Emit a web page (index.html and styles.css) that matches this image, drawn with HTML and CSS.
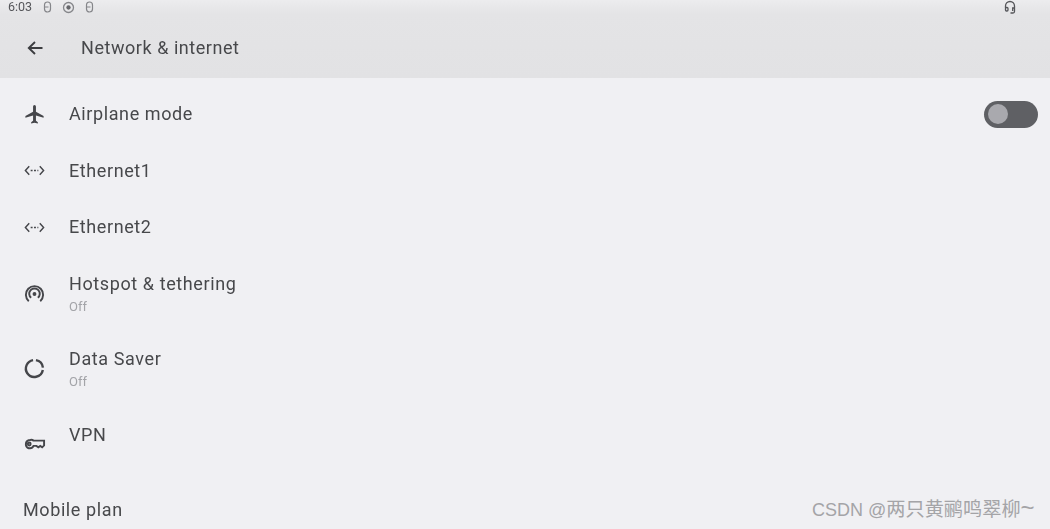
FILE: index.html
```html
<!DOCTYPE html>
<html lang="en">
<head>
<meta charset="utf-8">
<title>Network &amp; internet</title>
<link rel="stylesheet" href="styles.css">
</head>
<body>
<div class="screen">
  <header class="top">
    <div class="status">
      <div class="status-left">
        <span class="clock">6:03</span>
        <svg class="si" viewBox="0 0 10 12"><path d="M2 4C2 2 3.200 1 5 1s3 1 3 3v4c0 2-1.200 3-3 3S2 10 2 8V4M2 6h4"/></svg>
        <svg class="si si-rec" viewBox="0 0 12 12"><circle cx="6" cy="6" r="4.600"/><circle class="fill" cx="6" cy="6" r="2"/></svg>
        <svg class="si" viewBox="0 0 10 12"><path d="M2 4C2 2 3.200 1 5 1s3 1 3 3v4c0 2-1.200 3-3 3S2 10 2 8V4M2 6h4"/></svg>
      </div>
      <svg class="headset" viewBox="0 0 14 14"><path d="M2.500 8V6a4.500 4.500 0 0 1 9 0v5.500A1.500 1.500 0 0 1 10 13H7.500"/><rect x="2.500" y="7.500" width="2.500" height="3.500" rx="1"/><path d="M11.500 8h-1.800v3"/></svg>
    </div>
    <div class="appbar">
      <svg class="back" viewBox="0 0 18 18"><path d="M16.500 9H3M9 3 2.800 9 9 15"/></svg>
      <h1 class="title">Network &amp; internet</h1>
    </div>
  </header>
  <main class="list">
    <div class="row row-air">
      <svg class="icon" viewBox="0 0 24 24"><path class="fill" d="M21.500 15.500v-2L13.500 9V3.800C13.500 2.800 12.800 2 12 2s-1.500.8-1.500 1.800V9L2.500 13.500v2l8-2.500v5.500l-2 1.500V21.500L12 20.500l3.500 1V20l-2-1.500V13z"/></svg>
      <div class="text"><div class="name">Airplane mode</div></div>
      <div class="switch"><span class="thumb"></span></div>
    </div>
    <div class="row">
      <svg class="icon icon-thin" viewBox="0 0 24 24"><path d="M6.500 7.500 2.500 12l4 4.500M17.500 7.500l4 4.500-4 4.500"/><path class="dots" d="M8 12h8"/></svg>
      <div class="text"><div class="name">Ethernet1</div></div>
    </div>
    <div class="row">
      <svg class="icon icon-thin" viewBox="0 0 24 24"><path d="M6.500 7.500 2.500 12l4 4.500M17.500 7.500l4 4.500-4 4.500"/><path class="dots" d="M8 12h8"/></svg>
      <div class="text"><div class="name">Ethernet2</div></div>
    </div>
    <div class="row row-tall">
      <svg class="icon" viewBox="0 0 24 24"><path d="M6 20A9 9 0 1 1 18 20M8.500 16.500A5.500 5.500 0 1 1 15.500 16.500"/><circle class="fill" cx="12" cy="12.500" r="2"/></svg>
      <div class="text"><div class="name">Hotspot &amp; tethering</div><div class="sub">Off</div></div>
    </div>
    <div class="row row-tall">
      <svg class="icon icon-saver" viewBox="0 0 24 24"><path d="M13.500 3.200A9 9 0 0 1 20.800 11M20.700 13.500A9 9 0 0 1 4.500 17 9 9 0 0 1 10.500 3.200"/></svg>
      <div class="text"><div class="name">Data Saver</div><div class="sub">Off</div></div>
    </div>
    <div class="row row-tall">
      <svg class="icon" viewBox="0 0 24 24"><path d="M11 9h11v5l-2 2-2-1.500-2 1.500-2-1.500h-3A4 4 0 0 1 7 17H6A4.500 4.500 0 0 1 6 8.500h1A4 4 0 0 1 11 9z"/><circle cx="6.500" cy="12.500" r="1.500"/></svg>
      <div class="text text-vpn"><div class="name">VPN</div><div class="sub">&nbsp;</div></div>
    </div>
    <div class="row row-plain">
      <div class="name">Mobile plan</div>
    </div>
  </main>
  <div class="mark">CSDN @<span class="mark-cjk">两只黄鹂鸣翠柳</span><span class="mark-tilde">~</span></div>
</div>
</body>
</html>
```
FILE: styles.css
```css
* { box-sizing: border-box; }
html, body { margin: 0; padding: 0; height: 100%; overflow: hidden; }
body { background: #f0f0f3; font-family: Roboto, "Liberation Sans", sans-serif; color: #38393c; }
.screen { position: relative; width: 1050px; height: 529px; overflow: hidden; }
.top { height: 78px; background: linear-gradient(#ececee 0, #e4e4e6 14px, #e2e2e4 100%); }
.top, .list { filter: blur(0.45px); }
.status { height: 14px; padding: 0 33px 0 8px; display: flex; justify-content: space-between; align-items: center; }
.status-left { display: flex; align-items: center; gap: 9px; }
.clock { font-size: 12.500px; line-height: 14px; color: #55565a; margin-right: 1px; }
.si { width: 11px; height: 12px; fill: none; stroke: #85868a; stroke-width: 1.200; }
.si-rec { width: 13px; height: 13px; }
.si .fill { fill: #66676b; stroke: none; }
.headset { width: 14px; height: 14px; fill: none; stroke: #55565a; stroke-width: 1.300; }
.appbar { height: 64px; display: flex; align-items: center; padding: 7px 0 3px 26px; }
.back { width: 18px; height: 18px; fill: none; stroke: #3c3d40; stroke-width: 1.900; margin-right: 37px; }
.title { margin: 0; font-size: 18px; font-weight: 400; line-height: 24px; color: #47484b; letter-spacing: 0.550px; }
.list { padding-top: 8px; }
.row { height: 56.500px; display: flex; align-items: center; padding: 0 12px 0 23px; }
.row-tall { height: 75px; }
.row-plain { height: 58px; }
.icon { width: 23px; height: 23px; flex: none; margin-right: 23px; fill: none; stroke: #45464a; stroke-width: 2; }
.icon .fill { fill: #45464a; stroke: none; }
.icon-thin { stroke-width: 1.500; }
.icon-saver { stroke-width: 2.500; }
.icon .dots { stroke-dasharray: 2 1.500; }
.text { flex: 1; }
.row-tall .text { padding-top: 3px; }
.row-tall .text-vpn { padding-top: 4px; }
.name { font-size: 18px; line-height: 24px; color: #47484b; letter-spacing: 0.600px; }
.sub { margin-top: 1px; font-size: 13px; line-height: 20px; color: #a3a4a8; }
.switch { width: 54px; height: 27px; border-radius: 14px; background: #5f6064; display: flex; align-items: center; padding-left: 4px; }
.thumb { width: 20px; height: 20px; border-radius: 50%; background: #a9a9ae; }
.mark { position: absolute; left: 812px; top: 498px; font-size: 18px; line-height: 24px; color: #a4a4a7; font-family: "Liberation Sans", "Noto Sans CJK SC", sans-serif; white-space: nowrap; }
.mark-cjk { font-size: 19.200px; }
.mark-tilde { font-size: 24px; line-height: 20px; }
```
